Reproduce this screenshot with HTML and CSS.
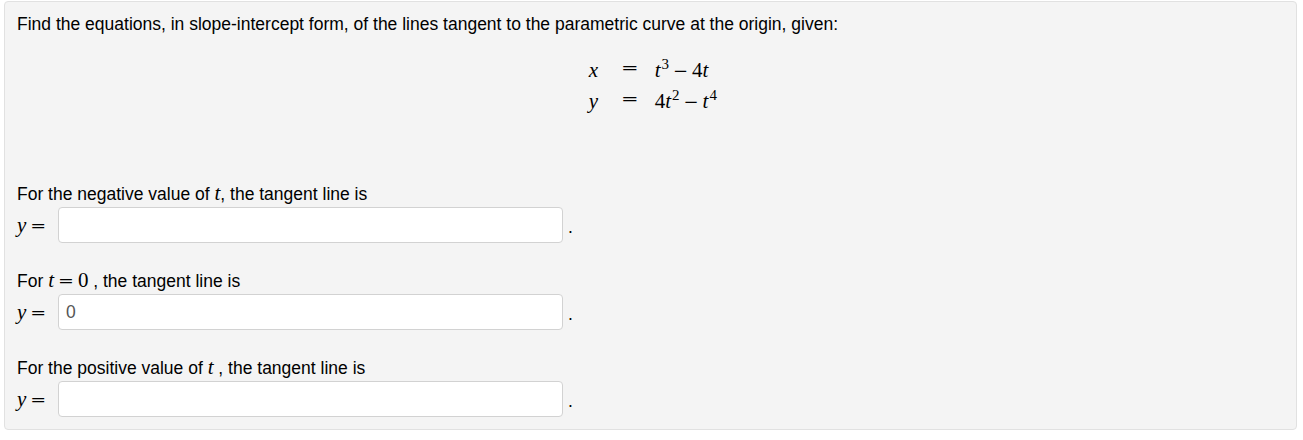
FILE: index.html
```html
<!DOCTYPE html>
<html>
<head>
<meta charset="utf-8">
<link rel="stylesheet" href="styles.css">
</head>
<body>
<div class="problem">
  <p class="intro">Find the equations, in slope-intercept form, of the lines tangent to the parametric curve at the origin, given:</p>
  <div class="display">
    <table class="eqs">
      <tr><td class="lhs"><i>x</i></td><td class="rel">=</td><td class="rhs"><i>t</i><sup>3</sup><span class="op">−</span>4<i>t</i></td></tr>
      <tr><td class="lhs"><i>y</i></td><td class="rel">=</td><td class="rhs">4<i>t</i><sup>2</sup><span class="op">−</span><i>t</i><sup>4</sup></td></tr>
    </table>
  </div>
  <div class="part first">
    <div class="label">For the negative value of <span class="m"><i>t</i></span>, the tangent line is</div>
    <div class="answer"><span class="m lead"><i>y</i><span class="eq">=</span></span><input class="box" type="text" value=""><span class="dot">.</span></div>
  </div>
  <div class="part">
    <div class="label">For <span class="m"><i>t</i><span class="eq">=</span>0</span> , the tangent line is</div>
    <div class="answer"><span class="m lead"><i>y</i><span class="eq">=</span></span><input class="box" type="text" value="0"><span class="dot">.</span></div>
  </div>
  <div class="part">
    <div class="label">For the positive value of <span class="m"><i>t</i></span> , the tangent line is</div>
    <div class="answer"><span class="m lead"><i>y</i><span class="eq">=</span></span><input class="box" type="text" value=""><span class="dot">.</span></div>
  </div>
</div>
</body>
</html>
```
FILE: styles.css
```css
html, body {
  margin: 0;
  padding: 0;
  background: #ffffff;
}
body {
  font-family: "Liberation Sans", Arial, sans-serif;
  font-size: 17.5px;
  color: #000;
}
.problem {
  margin: 1px 0 0 4px;
  width: 1293px;
  box-sizing: border-box;
  background: #f4f4f4;
  border: 1px solid #e1e1e1;
  border-radius: 4px;
  padding: 12px 12px 12px 12px;
}
.intro {
  margin: 0;
  line-height: 20px;
}
.display {
  margin-top: 21px;
  display: flex;
  justify-content: center;
}
.eqs {
  border-collapse: collapse;
  font-family: "Liberation Serif", "Times New Roman", serif;
  font-size: 21px;
}
.eqs td {
  height: 31px;
  padding: 0;
  vertical-align: middle;
}
.eqs .lhs { text-align: right; width: 14px; }
.eqs .rel { text-align: center; padding: 0 16px 0 23px; }
.eqs .rhs { text-align: left; }
.eqs sup {
  font-size: 15px;
  vertical-align: 8px;
  line-height: 0;
  margin-left: 1px;
}
.op {
  margin: 0 4px;
  font-family: "DejaVu Serif", serif;
  font-size: 18px;
}
.rel, .m .eq {
  font-family: "DejaVu Serif", serif;
  font-weight: 200;
  display: inline-block;
  transform: scaleY(0.8);
}
.part {
  margin-top: 27px;
}
.part.first {
  margin-top: 66px;
}
.label {
  line-height: 20px;
  height: 20px;
}
.m {
  font-family: "Liberation Serif", "Times New Roman", serif;
  font-size: 21px;
  line-height: 1;
}
.m .eq {
  margin: 0 4px 0 4px;
  font-style: normal;
  font-size: 19px;
}
.answer {
  margin-top: 4px;
  display: flex;
  align-items: center;
  height: 36px;
}
.lead {
  width: 41px;
  flex: none;
}
.box {
  width: 505px;
  height: 36px;
  box-sizing: border-box;
  border: 1px solid #d2d2d2;
  border-radius: 4px;
  background: #fff;
  padding: 0 7px;
  font-family: "Liberation Sans", Arial, sans-serif;
  font-size: 17.5px;
  color: #555;
  margin: 0;
  outline: none;
}
.dot {
  margin-left: 5px;
  position: relative;
  top: 2px;
}
```
